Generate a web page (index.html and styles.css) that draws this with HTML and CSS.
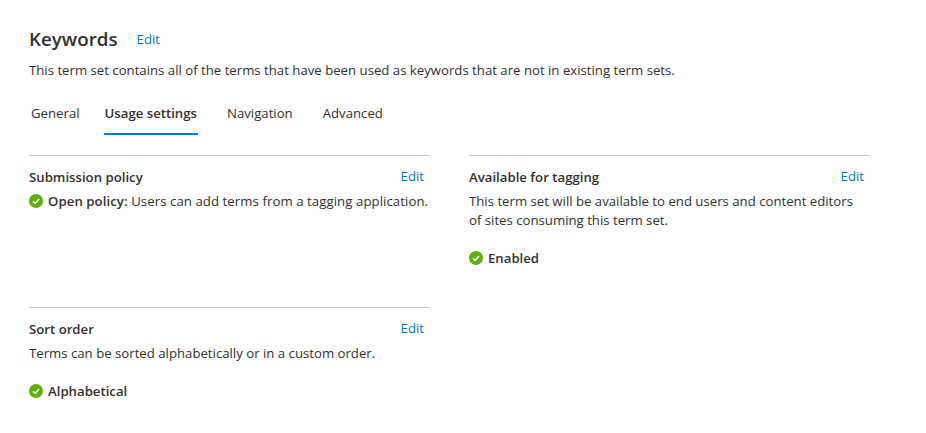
FILE: index.html
```html
<!DOCTYPE html>
<html lang="en">

<head>
  <meta charset="utf-8">
  <meta name="viewport" content="width=device-width, initial-scale=1.0">
  <title>Keywords</title>
  <link rel="stylesheet" href="styles.css">
</head>

<body>
  <div class="page">
    <div class="title-row">
      <h1>Keywords</h1>
      <a class="edit" href="#">Edit</a>
    </div>
    <p class="intro">This term set contains all of the terms that have been used as keywords that are not in existing term sets.</p>

    <div class="tabs">
      <a class="tab" href="#">General</a>
      <a class="tab active" href="#">Usage settings</a>
      <a class="tab" href="#">Navigation</a>
      <a class="tab" href="#">Advanced</a>
    </div>

    <div class="settings">
      <section class="card">
        <div class="card-head">
          <h2>Submission policy</h2>
          <a class="edit" href="#">Edit</a>
        </div>
        <div class="status inline">
          <svg class="check" viewBox="0 0 14 14"><circle cx="7" cy="7" r="7" fill="#5fb00e"/><path d="M3.9 7.2l2.2 2.2 4-4.3" fill="none" stroke="#fff" stroke-width="1.5"/></svg>
          <p><b>Open policy:</b> Users can add terms from a tagging application.</p>
        </div>
      </section>

      <section class="card">
        <div class="card-head">
          <h2>Available for tagging</h2>
          <a class="edit" href="#">Edit</a>
        </div>
        <p class="desc">This term set will be available to end users and content editors of sites consuming this term set.</p>
        <div class="status">
          <svg class="check" viewBox="0 0 14 14"><circle cx="7" cy="7" r="7" fill="#5fb00e"/><path d="M3.9 7.2l2.2 2.2 4-4.3" fill="none" stroke="#fff" stroke-width="1.5"/></svg>
          <b>Enabled</b>
        </div>
      </section>

      <section class="card">
        <div class="card-head">
          <h2>Sort order</h2>
          <a class="edit" href="#">Edit</a>
        </div>
        <p class="desc">Terms can be sorted alphabetically or in a custom order.</p>
        <div class="status">
          <svg class="check" viewBox="0 0 14 14"><circle cx="7" cy="7" r="7" fill="#5fb00e"/><path d="M3.9 7.2l2.2 2.2 4-4.3" fill="none" stroke="#fff" stroke-width="1.5"/></svg>
          <b>Alphabetical</b>
        </div>
      </section>
    </div>
  </div>
</body>

</html>
```

FILE: styles.css
```css
body {
  margin: 0;
  background-color: #fff;
  color: #323130;
  font-family: "Open Sans", "Noto Sans", sans-serif;
  font-size: 13.2px;
  line-height: 20px;
}

a {
  text-decoration: none;
}

p {
  margin: 0;
}

.page {
  padding: 25px 0 0 29px;
}

.title-row {
  display: flex;
  align-items: center;
  gap: 19px;
  height: 28px;
}

h1 {
  margin: 0;
  font-size: 18.8px;
  font-weight: 600;
  line-height: 28px;
}

.edit {
  color: #0078d4;
}

.intro {
  margin-top: 7px;
}

.tabs {
  display: flex;
  gap: 28px;
  margin-top: 13px;
  padding-left: 1px;
}

.tab {
  padding: 10px 1px;
  color: #323130;
  border-bottom: 2px solid transparent;
}

.tab:first-child {
  margin-right: -5px;
}

.tab.active {
  font-weight: 600;
  border-bottom-color: #0078d4;
}

.settings {
  display: grid;
  grid-template-columns: 400px 400px;
  grid-template-rows: 152px auto;
  column-gap: 40px;
  margin-top: 20px;
}

.card {
  padding-top: 11px;
  border-top: 1px solid #c8c6c4;
}

.card-head {
  display: flex;
  justify-content: space-between;
  padding-right: 5px;
}

.card-head .edit {
  margin-top: -1px;
}

h2 {
  margin: 0;
  font-size: 13.2px;
  font-weight: 600;
  line-height: 20px;
}

.desc {
  width: 390px;
  margin-top: 5px;
  line-height: 19px;
}

.status {
  display: flex;
  align-items: center;
  gap: 5px;
  margin-top: 18px;
}

.status.inline {
  margin-top: 4px;
  letter-spacing: 0.07px;
}

.status b {
  font-weight: 600;
}

.check {
  flex: none;
  width: 14px;
  height: 14px;
}
```
